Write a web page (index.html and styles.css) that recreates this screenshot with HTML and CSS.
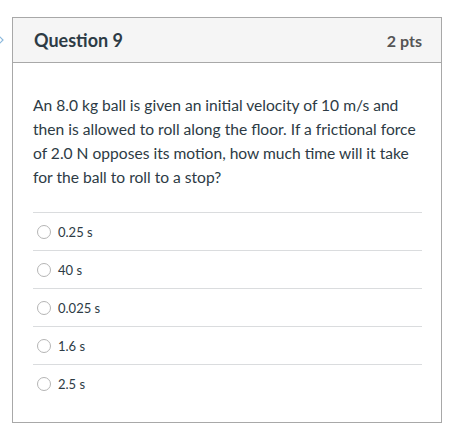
FILE: index.html
```html
<!DOCTYPE html>
<html>
<head>
<meta charset="utf-8">
<link rel="stylesheet" href="styles.css">
</head>
<body>
<div class="page">
  <svg class="chev" width="4" height="10" viewBox="0 0 4 10"><path d="M-1 1 L3 5 L-1 9" fill="none" stroke="#8ab8dc" stroke-width="1.2"/></svg>
  <div class="card">
    <div class="head">
      <span class="title">Question 9</span>
      <span class="pts">2 pts</span>
    </div>
    <div class="body">
      <p class="text">An 8.0 kg ball is given an initial velocity of 10 m/s and then is allowed to roll along the floor. If a frictional force of 2.0 N opposes its motion, how much time will it take for the ball to roll to a stop?</p>
      <div class="answers">
        <label class="opt"><span class="radio"></span><span>0.25 s</span></label>
        <label class="opt"><span class="radio"></span><span>40 s</span></label>
        <label class="opt"><span class="radio"></span><span>0.025 s</span></label>
        <label class="opt"><span class="radio"></span><span>1.6 s</span></label>
        <label class="opt"><span class="radio"></span><span>2.5 s</span></label>
      </div>
    </div>
  </div>
</div>
</body>
</html>
```
FILE: styles.css
```css
html, body { margin: 0; padding: 0; background: #fff; }
body { font-family: Lato, "Noto Sans", sans-serif; color: #2d3b45; }
.page { position: relative; padding: 17px 0 0 12px; }
.chev { position: absolute; left: 0; top: 35px; }
.card {
  width: 428px;
  border: 1px solid #a8a8a8;
}
.head {
  display: flex;
  justify-content: space-between;
  align-items: center;
  height: 44px;
  padding: 0 19px 0 21px;
  background: #f5f5f5;
  border-bottom: 1px solid #a8a8a8;
}
.title { font-size: 18px; font-weight: 700; color: #2d3b45; }
.pts { font-size: 16px; font-weight: 700; color: #555; }
.body { padding: 30px 19px 20px 20px; }
.text { margin: 0 0 23px; font-size: 15.6px; line-height: 24px; }
.answers { display: flex; flex-direction: column; }
.opt {
  display: flex;
  align-items: center;
  gap: 7px;
  height: 37px;
  border-top: 1px solid #dadcde;
  padding-left: 4px;
  font-size: 13px;
}
.radio {
  border: 1px solid #b5b5b5;
  border-radius: 50%;
  box-sizing: border-box;
  width: 14px; height: 14px;
}
```
